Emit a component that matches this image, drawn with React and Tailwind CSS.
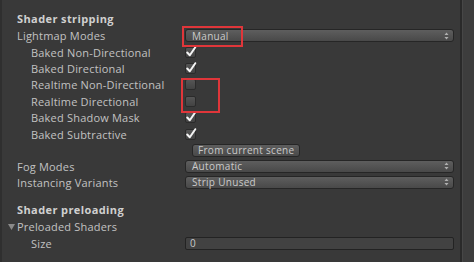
import React from 'react';

const font = { fontFamily: '"Open Sans", "DejaVu Sans", sans-serif' };

const Check = ({ checked }) => (
  <div className="relative w-[11px] h-[11px] rounded-[2px] bg-gradient-to-b from-[#555555] to-[#434343] border border-[#2b2b2b]">
    {checked && (
      <svg className="absolute -top-[3px] -left-[1px]" width="12" height="13" viewBox="0 0 12 13">
        <path d="M2.2 7.5 L4.8 10.3 L10.3 2.2" stroke="#f4f4f4" strokeWidth="2" fill="none" strokeLinecap="round" strokeLinejoin="round" />
      </svg>
    )}
  </div>
);

const Popup = ({ value }) => (
  <div className="flex-1 h-[13px] flex items-center justify-between rounded-[3px] border border-[#262626] bg-gradient-to-b from-[#5e5e5e] to-[#494949] pl-[6px] pr-[4px] text-[10px] text-[#cacaca] leading-none tracking-[0.3px]">
    <span>{value}</span>
    <svg width="5" height="8" viewBox="0 0 5 8">
      <path d="M0.5 3 L2.5 0.5 L4.5 3 Z M0.5 5 L2.5 7.5 L4.5 5 Z" fill="#b0b0b0" />
    </svg>
  </div>
);

const Row = ({ label, indent, children, h = 'h-[16px]' }) => (
  <div className={`flex items-center ${h}`}>
    <div className={`w-[168px] shrink-0 ${indent ? 'pl-[14px]' : ''}`}>{label}</div>
    <div className="flex-1 flex items-center">{children}</div>
  </div>
);

const lightmap = [
  ['Baked Non-Directional', true],
  ['Baked Directional', true],
  ['Realtime Non-Directional', false],
  ['Realtime Directional', false],
  ['Baked Shadow Mask', true],
  ['Baked Subtractive', true],
];

export default function App() {
  return (
    <div className="w-[474px] h-[262px] overflow-hidden flex bg-[#393939] text-[#c2c2c2] text-[11px] leading-none tracking-[0.2px]" style={font}>
      <div className="w-[2px] bg-[#2f2f2f]" />
      <div className="flex-1 relative pl-[15px] pr-[2px] pt-[10px]">
        <div className="h-[17px] flex items-center font-bold text-[#d0d0d0] tracking-[0.4px]">Shader stripping</div>
        <Row label="Lightmap Modes" h="h-[17px]">
          <Popup value="Manual" />
        </Row>
        {lightmap.map(([l, c]) => (
          <Row key={l} label={l} indent h="h-[16.4px]">
            <Check checked={c} />
          </Row>
        ))}
        <Row label="" h="h-[16px]">
          <div className="ml-[7px] h-[13px] px-[5px] flex items-center rounded-[3px] border border-[#262626] bg-gradient-to-b from-[#5e5e5e] to-[#494949] text-[10px] text-[#cacaca] tracking-[0.3px]">
            From current scene
          </div>
        </Row>
        <Row label="Fog Modes" h="h-[16px]">
          <Popup value="Automatic" />
        </Row>
        <Row label="Instancing Variants" h="h-[16px]">
          <Popup value="Strip Unused" />
        </Row>
        <div className="h-[11px]" />
        <div className="h-[17px] flex items-center font-bold text-[#d0d0d0] tracking-[0.4px]">Shader preloading</div>
        <div className="h-[17px] flex items-center -ml-[9px]">
          <svg width="7" height="6" viewBox="0 0 7 6" className="mr-[2px]">
            <path d="M0 0 L7 0 L3.5 6 Z" fill="#8a8a8a" />
          </svg>
          Preloaded Shaders
        </div>
        <Row label="Size" indent h="h-[16px]">
          <div className="flex-1 h-[13px] flex items-center rounded-[2px] border border-[#232323] bg-[#424242] pl-[4px] text-[10px] text-[#cacaca]">
            0
          </div>
        </Row>

        <div className="absolute left-[180px] top-[26px] w-[61px] h-[21px] border-2 border-[#e0363a]" />
        <div className="absolute left-[179px] top-[78px] w-[39px] h-[35px] border-2 border-[#e0363a]" />
      </div>
      <div className="w-[4px]" />
      <div className="w-[2px] bg-[#2a2a2a]" />
      <div className="w-[12px] bg-[#3d3d3d] border-l border-[#474747]" />
    </div>
  );
}
